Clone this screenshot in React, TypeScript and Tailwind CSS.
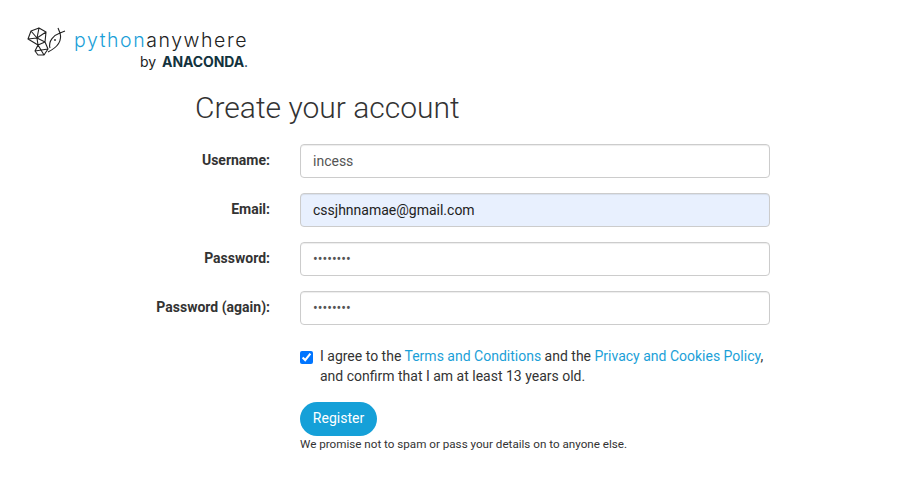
const fieldClass =
  "h-[34px] w-[470px] rounded-[4px] border border-[#ccc] px-3 font-['Roboto',sans-serif] text-[14px] shadow-[inset_0_1px_1px_rgba(0,0,0,0.075)] outline-none";

const fields = [
  { label: "Username:", type: "text", value: "incess", extra: "bg-white text-[#555]" },
  { label: "Email:", type: "text", value: "cssjhnnamae@gmail.com", extra: "bg-[#e8f0fe] text-[#222]" },
  { label: "Password:", type: "password", value: "password", extra: "bg-white text-[#555]" },
  { label: "Password (again):", type: "password", value: "password", extra: "bg-white text-[#555]" },
];

function LogoMark() {
  return (
    <svg width="40" height="30" viewBox="0 0 40 30" fill="none" stroke="#222" strokeWidth="1.1" strokeLinejoin="round" aria-hidden="true">
      <path d="M12 1 L4 4 L1 12 L10 11 L12 1 L19 5 L10 11 L4 4 M19 5 L18 15 L10 11 L11 18 L18 15 M1 12 L11 18 L8 24 L11 28 L17 28 L21 22 L18 15 M11 18 L17 28 M8 24 L21 22" />
      <path d="M23 21 C21 14 27 8 33 6 C35 13 31 20 21 25" />
      <path d="M33 6 L31 1 M33 6 L38 4" />
      <circle cx="28" cy="13" r="0.9" fill="#222" stroke="none" />
    </svg>
  );
}

export default function App() {
  return (
    <div className="h-[491px] w-[899px] overflow-hidden bg-white font-['Roboto',sans-serif] text-[14px] text-[#333]">
      <header className="flex items-start gap-[7px] pl-[27px] pt-[27px]">
        <LogoMark />
        <div className="flex w-[174px] flex-col items-end pt-[2px]">
          <div className="h-[22px] whitespace-nowrap font-['Inter',sans-serif] text-[19.5px] leading-[22px] font-light tracking-[1.55px]">
            <span className="text-[#1b9fd8]">python</span>
            <span className="text-[#222]">anywhere</span>
          </div>
          <div className="mt-[3px] flex items-baseline gap-[6px] font-['Inter',sans-serif] leading-[16px]">
            <span className="text-[14px] text-[#222]">by</span>
            <span className="text-[14px] font-bold tracking-[-0.1px] text-[#12323d]">
              ANACONDA<span className="font-normal">.</span>
            </span>
          </div>
        </div>
      </header>

      <main>
        <h1 className="ml-[195px] mt-[21px] text-[30px] leading-[33px] font-light text-[#333]">Create your account</h1>

        <form className="mt-[20px] flex flex-col gap-[15px]">
          {fields.map((field) => (
            <div key={field.label} className="flex items-start gap-[30px]">
              <label className="w-[270px] pt-[6px] text-right text-[14px] leading-[20px] font-bold">{field.label}</label>
              <input type={field.type} readOnly defaultValue={field.value} className={`${fieldClass} ${field.extra}`} />
            </div>
          ))}

          <div className="ml-[300px] mt-[6px] flex items-start gap-[7px]">
            <input type="checkbox" readOnly checked className="mt-[5px] size-[13px] accent-[#0075ff]" />
            <p className="text-[14px] leading-[20px] text-[#333]">
              I agree to the <a className="text-[#1b9fd8]">Terms and Conditions</a> and the{" "}
              <a className="text-[#1b9fd8]">Privacy and Cookies Policy</a>,
              <br />
              and confirm that I am at least 13 years old.
            </p>
          </div>

          <div className="ml-[300px] mt-[1px]">
            <button type="button" className="h-[34px] w-[77px] rounded-[17px] bg-[#15a0d8] pb-[2px] text-[14px] text-white">
              Register
            </button>
            <p className="text-[11.65px] leading-[17px] text-[#333]">We promise not to spam or pass your details on to anyone else.</p>
          </div>
        </form>
      </main>
    </div>
  );
}
